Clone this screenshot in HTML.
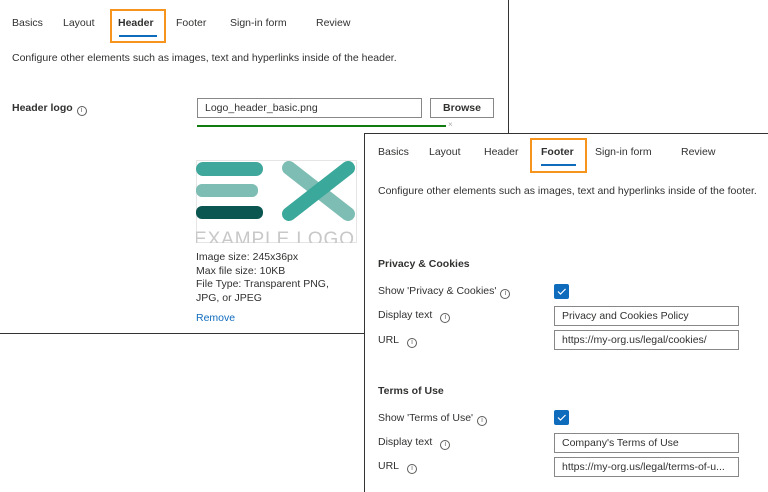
<!DOCTYPE html>
<html><head><style>
*{margin:0;padding:0;box-sizing:border-box}
body{width:768px;height:492px;background:#fff;position:relative;overflow:hidden;font-family:"Liberation Sans",sans-serif;font-size:10.5px;color:#323130}
.p{position:absolute;background:#fff;border:1px solid #333}
.a{position:absolute;white-space:nowrap}
.ob{position:absolute;border:2px solid #f7941d}
.ul{position:absolute;height:2px;background:#0f6cbd}
.in{position:absolute;border:1px solid #8a8886;background:#fff;padding-left:7px;line-height:18px;white-space:nowrap;overflow:hidden}
.i{display:inline-block;width:10px;height:10px;border:1px solid #605e5c;border-radius:50%;font-size:7px;line-height:8px;text-align:center;vertical-align:-1px;margin-left:4px;color:#605e5c}
.cb{position:absolute;width:15px;height:15px;background:#0f6cbd;border-radius:2px}
b{font-weight:bold}
</style></head><body>
<div class="p" style="left:0;top:0;width:509px;height:334px;border-top:none;border-left:none"></div>
<div class="a" style="left:12px;top:17px">Basics</div>
<div class="a" style="left:63px;top:17px">Layout</div>
<div class="a" style="left:118px;top:17px"><b>Header</b></div>
<div class="a" style="left:176px;top:17px">Footer</div>
<div class="a" style="left:230px;top:17px">Sign-in form</div>
<div class="a" style="left:316px;top:17px">Review</div>
<div class="ob" style="left:110px;top:9px;width:56px;height:34px"></div>
<div class="ul" style="left:119px;top:35px;width:38px"></div>
<div class="a" style="left:12px;top:52px">Configure other elements such as images, text and hyperlinks inside of the header.</div>
<div class="a" style="left:12px;top:102px"><b>Header logo</b><span class="i">i</span></div>
<div class="in" style="left:197px;top:98px;width:225px;height:20px">Logo_header_basic.png</div>
<div class="in" style="left:430px;top:98px;width:64px;height:20px;padding:0;text-align:center;font-weight:bold">Browse</div>
<div style="position:absolute;left:197px;top:125px;width:249px;height:2px;background:#107c10"></div>
<div class="a" style="left:448px;top:120px;font-size:8px;color:#aaa">×</div>
<svg style="position:absolute;left:196px;top:160px" width="161" height="83">
<rect x="0.5" y="0.5" width="160" height="82" fill="#fff" stroke="#e5e5e5"/>
<rect x="0" y="2" width="67" height="14" rx="7" fill="#3fa79b"/>
<rect x="0" y="24" width="62" height="13" rx="6" fill="#7dbdb3"/>
<rect x="0" y="46" width="67" height="13" rx="6" fill="#0b5650"/>
<line x1="93" y1="8" x2="152" y2="54" stroke="#7dbdb3" stroke-width="14" stroke-linecap="round"/>
<line x1="152" y1="8" x2="93" y2="54" stroke="#3aa89a" stroke-width="14" stroke-linecap="round"/>
<text x="-2" y="85" font-size="19" fill="#c8c8c8" font-family="Liberation Sans" textLength="160">EXAMPLE LOGO</text>
</svg>
<div class="a" style="left:196px;top:251px;line-height:13.5px">Image size: 245x36px<br>Max file size: 10KB<br>File Type: Transparent PNG,<br>JPG, or JPEG</div>
<div class="a" style="left:196px;top:312px;color:#0f6cbd">Remove</div>

<div class="p" style="left:364px;top:133px;width:404px;height:359px;border-right:none;border-bottom:none"></div>
<div class="a" style="left:378px;top:146px">Basics</div>
<div class="a" style="left:429px;top:146px">Layout</div>
<div class="a" style="left:484px;top:146px">Header</div>
<div class="a" style="left:541px;top:146px"><b>Footer</b></div>
<div class="a" style="left:595px;top:146px">Sign-in form</div>
<div class="a" style="left:681px;top:146px">Review</div>
<div class="ob" style="left:530px;top:138px;width:57px;height:35px"></div>
<div class="ul" style="left:541px;top:164px;width:35px"></div>
<div class="a" style="left:378px;top:185px">Configure other elements such as images, text and hyperlinks inside of the footer.</div>
<div class="a" style="left:378px;top:258px"><b>Privacy &amp; Cookies</b></div>
<div class="a" style="left:378px;top:285px">Show 'Privacy &amp; Cookies'<span class="i">i</span></div>
<div class="cb" style="left:554px;top:284px"><svg width="15" height="15"><path d="M4 7.5l2.5 2.5 5-5" stroke="#fff" fill="none" stroke-width="1.2"/></svg></div>
<div class="a" style="left:378px;top:309px">Display text<span class="i" style="margin-left:8px">i</span></div>
<div class="in" style="left:554px;top:306px;width:185px;height:20px">Privacy and Cookies Policy</div>
<div class="a" style="left:378px;top:334px">URL<span class="i" style="margin-left:8px">i</span></div>
<div class="in" style="left:554px;top:330px;width:185px;height:20px">https://my-org.us/legal/cookies/</div>
<div class="a" style="left:378px;top:385px"><b>Terms of Use</b></div>
<div class="a" style="left:378px;top:412px">Show 'Terms of Use'<span class="i">i</span></div>
<div class="cb" style="left:554px;top:410px"><svg width="15" height="15"><path d="M4 7.5l2.5 2.5 5-5" stroke="#fff" fill="none" stroke-width="1.2"/></svg></div>
<div class="a" style="left:378px;top:436px">Display text<span class="i" style="margin-left:8px">i</span></div>
<div class="in" style="left:554px;top:433px;width:185px;height:20px">Company's Terms of Use</div>
<div class="a" style="left:378px;top:460px">URL<span class="i" style="margin-left:8px">i</span></div>
<div class="in" style="left:554px;top:457px;width:185px;height:20px">https://my-org.us/legal/terms-of-u...</div>
</body></html>
